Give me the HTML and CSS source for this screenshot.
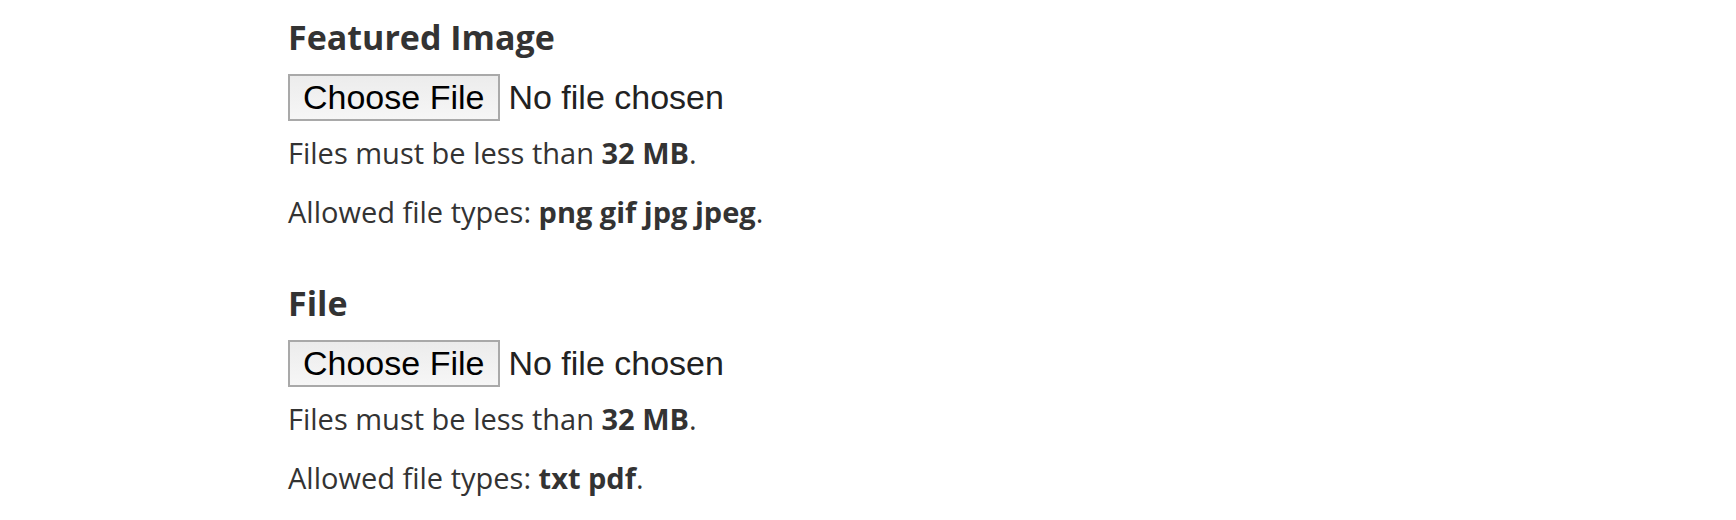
FILE: index.html
```
<!DOCTYPE html>
<html lang="en">

<head>
    <meta charset="UTF-8">
    <meta name="viewport" content="width=device-width, initial-scale=1.0">
    <title>Upload</title>
    <link rel="stylesheet" href="styles.css">
</head>

<body>
    <form class="container">
        <div class="form-item">
            <h3 class="form-label">Featured Image</h3>
            <div class="file-field">
                <label class="file-btn">Choose File<input type="file" accept=".png,.gif,.jpg,.jpeg" hidden></label>
                <span class="file-name">No file chosen</span>
            </div>
            <p class="description">Files must be less than <strong>32 MB</strong>.</p>
            <p class="description">Allowed file types: <strong>png gif jpg jpeg</strong>.</p>
        </div>

        <div class="form-item">
            <h3 class="form-label">File</h3>
            <div class="file-field">
                <label class="file-btn">Choose File<input type="file" accept=".txt,.pdf" hidden></label>
                <span class="file-name">No file chosen</span>
            </div>
            <p class="description">Files must be less than <strong>32 MB</strong>.</p>
            <p class="description">Allowed file types: <strong>txt pdf</strong>.</p>
        </div>
    </form>
</body>

</html>
```

FILE: styles.css
```
* {
    margin: 0;
    padding: 0;
    box-sizing: border-box;
}

body {
    background: #fff;
    color: #333;
    font-family: "Open Sans", "Liberation Sans", sans-serif;
}

.container {
    width: 1160px;
    margin: 0 auto;
    padding-top: 14px;
}

.form-item {
    margin-bottom: 47px;
}

.form-label {
    font-size: 34px;
    line-height: 46px;
    font-weight: 700;
    margin-bottom: 14px;
}

.file-field {
    display: flex;
    align-items: center;
    margin-bottom: 11px;
    font-family: "Liberation Sans", Arial, sans-serif;
    font-size: 34px;
}

.file-btn {
    display: flex;
    align-items: center;
    height: 47px;
    padding: 0 14px 0 13px;
    border: 2px solid #a9a9a9;
    background: linear-gradient(#ececec, #f6f6f6);
    color: #000;
    cursor: pointer;
}

.file-name {
    margin-left: 8px;
    color: #222;
}

.description {
    font-size: 29px;
    line-height: 42px;
    margin-bottom: 17px;
}

.description:last-child {
    margin-bottom: 0;
}

.description strong {
    font-weight: 700;
}
```
